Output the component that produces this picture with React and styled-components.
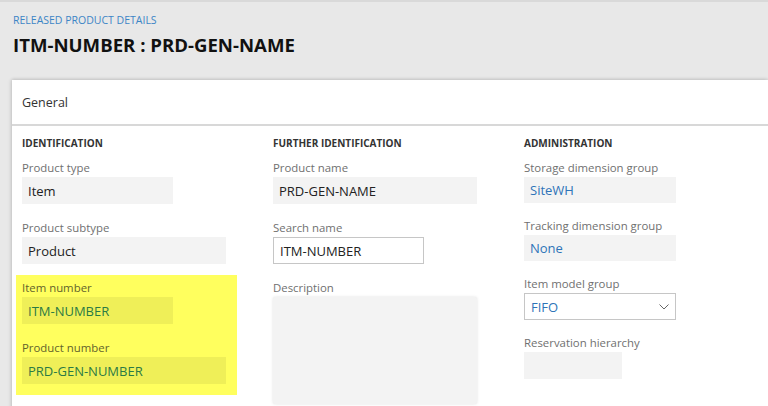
import React from "react";
import styled, { createGlobalStyle } from "styled-components";

const GlobalStyle = createGlobalStyle`
  html, body {
    margin: 0;
    padding: 0;
    background: #e8e8e8;
    font-family: "Open Sans", "Noto Sans", "Liberation Sans", sans-serif;
    overflow: hidden;
  }
`;

const Page = styled.div`
  min-height: 406px;
  border-top: 2px solid #d9d9d9;
  box-sizing: border-box;
`;

const Header = styled.header`
  padding: 11px 13px 0;
  height: 78px;
  box-sizing: border-box;
`;

const Breadcrumb = styled.div`
  font-size: 10.5px;
  line-height: 14px;
  color: #3c85c6;
`;

const Title = styled.h1`
  margin: 6px 0 0;
  font-size: 18.6px;
  line-height: 24px;
  font-weight: 700;
  color: #111;
`;

const Card = styled.section`
  margin-left: 12px;
  background: #fff;
  box-shadow: -1px 0 4px rgba(0, 0, 0, 0.12), 0 -1px 3px rgba(0, 0, 0, 0.1);
  min-height: 340px;
`;

const CardHeader = styled.div`
  height: 44px;
  padding-left: 10px;
  display: flex;
  align-items: center;
  font-size: 12.5px;
  color: #333;
  border-bottom: 2px solid #d8d8d8;
`;

const Columns = styled.div`
  display: grid;
  grid-template-columns: 251px 251px 251px;
  padding: 10px 0 0 10px;
`;

const Column = styled.div`
  display: flex;
  flex-direction: column;
`;

const Section = styled.div`
  font-size: 10px;
  line-height: 14px;
  font-weight: 700;
  color: #333;
  text-transform: uppercase;
  margin-bottom: 10px;
`;

const Field = styled.div`
  display: flex;
  flex-direction: column;
  margin-bottom: ${(p) => p.$gap ?? 16}px;
`;

const Label = styled.label`
  font-size: 11.4px;
  line-height: 16px;
  color: ${(p) => (p.$marked ? "#63632c" : "#707070")};
  margin-bottom: 1px;
`;

const Box = styled.div`
  width: ${(p) => p.$w}px;
  height: ${(p) => p.$h ?? 27}px;
  box-sizing: border-box;
  display: flex;
  align-items: center;
  justify-content: space-between;
  padding: 0 6px;
  font-size: 13px;
  color: ${(p) => (p.$link ? "#2e74b8" : "#222")};
  background: #f3f3f3;
`;

const Input = styled(Box)`
  background: #fff;
  border: 1px solid #c6c6c6;
`;

const Area = styled(Box)`
  height: 107px;
  border-radius: 2px;
  box-shadow: 0 0 3px rgba(0, 0, 0, 0.12);
`;

const Highlight = styled.div`
  margin-left: -6px;
  width: 221px;
  padding: 5px 6px 11px;
  box-sizing: border-box;
  background: #ffff5e;
  margin-top: -5px;

  ${Box} {
    background: #efef58;
    color: #2b7a45;
  }
`;

const Chevron = () => (
  <svg width="10" height="6" viewBox="0 0 10 6">
    <path d="M0.5 0.5 L5 5 L9.5 0.5" fill="none" stroke="#666" strokeWidth="1" />
  </svg>
);

export default function App() {
  return (
    <Page>
      <GlobalStyle />
      <Header>
        <Breadcrumb>RELEASED PRODUCT DETAILS</Breadcrumb>
        <Title>ITM-NUMBER : PRD-GEN-NAME</Title>
      </Header>
      <Card>
        <CardHeader>General</CardHeader>
        <Columns>
          <Column>
            <Section>Identification</Section>
            <Field>
              <Label>Product type</Label>
              <Box $w={151}>Item</Box>
            </Field>
            <Field>
              <Label>Product subtype</Label>
              <Box $w={204}>Product</Box>
            </Field>
            <Highlight>
              <Field $gap={16}>
                <Label $marked>Item number</Label>
                <Box $w={151}>ITM-NUMBER</Box>
              </Field>
              <Field $gap={0}>
                <Label $marked>Product number</Label>
                <Box $w={204}>PRD-GEN-NUMBER</Box>
              </Field>
            </Highlight>
          </Column>
          <Column>
            <Section>Further identification</Section>
            <Field>
              <Label>Product name</Label>
              <Box $w={204}>PRD-GEN-NAME</Box>
            </Field>
            <Field>
              <Label>Search name</Label>
              <Input $w={151}>ITM-NUMBER</Input>
            </Field>
            <Field>
              <Label>Description</Label>
              <Area $w={204} />
            </Field>
          </Column>
          <Column>
            <Section>Administration</Section>
            <Field $gap={15}>
              <Label>Storage dimension group</Label>
              <Box $w={152} $h={26} $link>SiteWH</Box>
            </Field>
            <Field $gap={15}>
              <Label>Tracking dimension group</Label>
              <Box $w={152} $h={26} $link>None</Box>
            </Field>
            <Field $gap={15}>
              <Label>Item model group</Label>
              <Input $w={152} $link>
                FIFO
                <Chevron />
              </Input>
            </Field>
            <Field>
              <Label>Reservation hierarchy</Label>
              <Box $w={98} />
            </Field>
          </Column>
        </Columns>
      </Card>
    </Page>
  );
}
